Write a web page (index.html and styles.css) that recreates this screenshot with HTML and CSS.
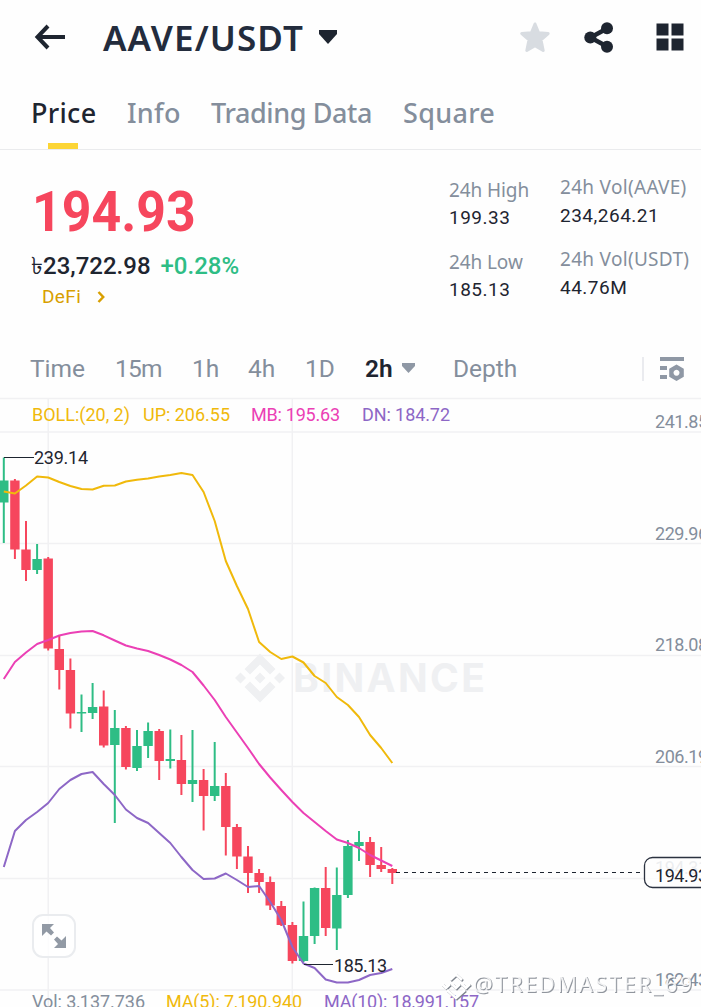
FILE: index.html
```html
<!DOCTYPE html>
<html lang="en">
  <head>
    <meta charset="utf-8">
    <title>AAVE/USDT</title>
    <link rel="stylesheet" href="styles.css">
  </head>
  <body>
    <header class="topbar">
      <svg class="back" width="32" height="26" viewBox="0 0 32 26">
        <path d="M14 2 L3.5 13 L14 24 M3.5 13 H31" />
      </svg>
      <h1 class="pair">AAVE/USDT</h1>
      <svg class="pair-caret" width="18" height="14" viewBox="0 0 18 14">
        <path d="M0 0H18V4L9 14L0 4Z" />
      </svg>
      <div class="actions">
        <svg class="star" width="30" height="31" viewBox="0 0 30 31">
          <path d="M15 2 L18.600 10.700 L28.200 11.500 L21 17.800 L23.200 28.500 L15 23.600 L6.800 28.500 L9 17.800 L1.800 11.500 L11.400 10.700 Z" />
        </svg>
        <svg class="share" width="30" height="31" viewBox="0 0 30 31">
          <path d="M23 6.500 L6.500 15.500 L23 24.500" />
          <circle cx="6.300" cy="15.500" r="6" />
          <circle cx="23" cy="6.300" r="6" />
          <circle cx="23" cy="24.700" r="6" />
        </svg>
        <svg class="apps" width="28" height="28" viewBox="0 0 28 28">
          <path d="M.5 .5h12v12h-12z M15.500 .5h12v12h-12z M.5 15.500h12v12h-12z M15.500 15.500h12v12h-12z" />
        </svg>
      </div>
    </header>

    <nav class="tabs">
      <a class="tab active">Price</a>
      <a class="tab info">Info</a>
      <a class="tab trading">Trading Data</a>
      <a class="tab square">Square</a>
    </nav>

    <section class="ticker">
      <div class="ticker-main">
        <div class="last-price">194.93</div>
        <div class="fiat">
          <span class="fiat-price">৳23,722.98</span>
          <span class="change">+0.28%</span>
        </div>
        <a class="tag">DeFi
          <svg width="8" height="12" viewBox="0 0 8 12"><path d="M1.500 1L6.200 6L1.500 11" /></svg>
        </a>
      </div>
      <dl class="stats">
        <dt>24h High</dt>
        <dd>199.33</dd>
        <dt>24h Low</dt>
        <dd>185.13</dd>
      </dl>
      <dl class="stats volume">
        <dt>24h Vol(AAVE)</dt>
        <dd>234,264.21</dd>
        <dt>24h Vol(USDT)</dt>
        <dd>44.76M</dd>
      </dl>
    </section>

    <nav class="intervals">
      <a class="time">Time</a>
      <a class="m15">15m</a>
      <a class="h1">1h</a>
      <a class="h4">4h</a>
      <a class="d1">1D</a>
      <a class="h2 active">2h
        <svg width="13" height="10" viewBox="0 0 13 10"><path d="M0 0H13V3L6.500 10L0 3Z" /></svg>
      </a>
      <a class="depth">Depth</a>
      <svg class="settings" width="24" height="24" viewBox="0 0 24 24">
        <path d="M0 0H24V4H0Z M0 9H7V13H0Z M0 18H7V22H0Z" />
        <path fill-rule="evenodd" d="M16.500 7.500L23.800 11.700V19.800L16.500 24L9.200 19.800V11.700Z M16.500 12.700a3 3 0 1 0 .01 0Z" />
      </svg>
    </nav>

    <main class="chart">
      <svg class="plot" width="701" height="610" viewBox="0 397 701 610">
        <g class="grid">
          <path d="M0 398.500H701 M0 432H701 M0 543.500H701 M0 655.500H701 M0 766.500H701 M0 878.500H701 M0 990H701" />
          <path d="M48.200 399V1007 M292.300 399V1007" />
        </g>

        <g class="brand">
          <path d="M260 653.500L275.500 669L270 674.500L260 664.500L250 674.500L244.500 669Z M260 702.500L275.500 687L270 681.500L260 691.500L250 681.500L244.500 687Z M260 672.500L265.500 678L260 683.500L254.500 678Z M240.500 672.500L246 678L240.500 683.500L235 678Z M279.500 672.500L285 678L279.500 683.500L274 678Z" />
          <text x="293" y="692" textLength="192">BINANCE</text>
        </g>

        <g class="axis">
          <text x="655" y="428" textLength="53">241.85</text>
          <text x="655" y="540" textLength="53">229.96</text>
          <text x="655" y="651" textLength="53">218.08</text>
          <text x="655" y="763" textLength="53">206.19</text>
          <text x="655" y="874" textLength="53">194.31</text>
          <text x="655" y="986" textLength="53">182.43</text>
        </g>

        <g class="legend">
          <text class="up" x="32" y="421" textLength="98">BOLL:(20, 2)</text>
          <text class="up" x="143" y="421" textLength="87">UP: 206.55</text>
          <text class="mb" x="251" y="421" textLength="89">MB: 195.63</text>
          <text class="dn" x="362" y="421" textLength="88">DN: 184.72</text>
          <text class="vol" x="32" y="1008" textLength="113">Vol: 3,137.736</text>
          <text class="up" x="166" y="1008" textLength="136">MA(5): 7,190.940</text>
          <text class="dn" x="324" y="1008" textLength="155">MA(10): 18,991.157</text>
        </g>

        <g id="candles"></g>
        <g id="bands"></g>

        <g class="extremes">
          <path d="M4 457.500H34 M304 964.500H333" />
          <text x="34" y="464" textLength="54">239.14</text>
          <text x="334" y="972" textLength="53">185.13</text>
        </g>

        <g class="current">
          <path d="M396 872.500H642" />
          <rect x="644.500" y="857.500" width="80" height="30" rx="8" />
          <text x="655" y="882" textLength="53">194.93</text>
        </g>

        <g class="watermark">
          <path d="M450 980L456 974.500L462 980 M442 984L446 988L450 984 M452 984L456 988L460 984 M462 984L466 988L470 984 M447 990L456 998L465 990" />
          <text x="473" y="992" textLength="219">@TREDMASTER_69</text>
        </g>
      </svg>
      <button class="expand">
        <svg width="24" height="24" viewBox="0 0 24 24">
          <path d="M0 0H12L8 4L12 8.500L9 11.500L4.500 7.500L0 12Z M24 24H12L16 20L12 15.500L15 12.500L19.500 16.500L24 12Z" />
        </svg>
      </button>
    </main>

    <script src="chart.js"></script>
  </body>
</html>
```
FILE: styles.css
```css
body {
  margin: 0;
  width: 701px;
  height: 1007px;
  overflow: hidden;
  background: #fefefe;
  color: #1e2530;
  font-family: Roboto, "Liberation Sans", sans-serif;
}

svg {
  display: block;
  flex: none;
}

.topbar {
  display: flex;
  align-items: center;
  height: 74px;
  padding: 0 17px 0 34px;
}

.back path {
  fill: none;
  stroke: #1e2530;
  stroke-width: 4;
}

.pair {
  margin: 2px 0 0 37px;
  width: 216px;
  font: 600 35px/48px "Noto Sans", sans-serif;
  letter-spacing: 1.1px;
  white-space: nowrap;
  color: #232c3d;
}

.pair-caret {
  fill: #1e2530;
}

.actions {
  display: flex;
  align-items: center;
  margin-left: auto;
}

.star {
  fill: #d8dce1;
  stroke: #d8dce1;
  stroke-width: 3;
  stroke-linejoin: round;
}

.share {
  margin-left: 34px;
  fill: #1e2530;
}

.share path {
  fill: none;
  stroke: #1e2530;
  stroke-width: 4.5;
}

.apps {
  margin-left: 42px;
  fill: #1e2530;
}

.tabs {
  display: flex;
  height: 75px;
  padding-left: 31px;
  border-bottom: 1px solid #eaebed;
  font: 500 27px/78px "Noto Sans", sans-serif;
  color: #848e9c;
}

.tab {
  box-sizing: border-box;
  flex: none;
  white-space: nowrap;
  letter-spacing: 0.3px;
}

.tab.active {
  width: 96px;
  height: 75px;
  color: #1e2530;
  background: linear-gradient(#fcd535, #fcd535) 17px 69px / 30px 6px no-repeat;
}

.tab.info {
  width: 84px;
}

.tab.trading {
  width: 192px;
  letter-spacing: -0.4px;
}

.ticker {
  display: flex;
  height: 190px;
  box-sizing: border-box;
  padding: 25px 0 0 31px;
}

.ticker-main {
  width: 418px;
}

.last-price {
  height: 76px;
  font-size: 56px;
  font-weight: 700;
  line-height: 75px;
  color: #f6465d;
  transform: translateX(1px) scaleX(0.925);
  transform-origin: left;
}

.fiat {
  display: flex;
  gap: 10px;
  font-size: 24px;
  font-weight: 500;
  line-height: 30px;
}

.change {
  color: #2ebd85;
}

.tag {
  display: flex;
  align-items: center;
  gap: 16px;
  margin-left: 11px;
  font-size: 19px;
  line-height: 32px;
  letter-spacing: 0.4px;
  color: #d89f00;
}

.tag path {
  fill: none;
  stroke: #d89f00;
  stroke-width: 2.5;
}

.stats {
  margin: 0;
  padding-top: 1px;
  width: 111px;
  white-space: nowrap;
}

.stats.volume {
  padding-top: 0;
}

.stats dt {
  font: 19px/28px "Noto Sans", sans-serif;
  letter-spacing: -0.1px;
  color: #848e9c;
}

.stats.volume dt {
  margin-top: -2px;
  padding-bottom: 1px;
  letter-spacing: 0.3px;
}

.stats dd {
  margin: 0 0 16px;
  font-size: 19px;
  line-height: 28px;
  letter-spacing: 0.5px;
}

.stats.volume dd {
  margin-bottom: 17px;
}

.intervals {
  display: flex;
  align-items: center;
  height: 57px;
  padding-left: 30px;
  font-size: 24.5px;
  color: #848e9c;
}

.intervals a {
  flex: none;
}

.time {
  width: 85px;
}

.m15 {
  width: 77px;
  letter-spacing: -0.8px;
}

.h1 {
  width: 56px;
}

.h4 {
  width: 57px;
}

.d1 {
  width: 60px;
}

.h2 {
  display: flex;
  align-items: center;
  gap: 9px;
  width: 88px;
  font-weight: 600;
}

.h2.active {
  color: #1e2530;
}

.h2 svg {
  margin-top: -2px;
}

.h2 svg,
.settings {
  fill: #8f98a5;
}

.depth {
  width: 189px;
}

.settings {
  padding-left: 16px;
  border-left: 2px solid #eaebef;
}

.chart {
  position: relative;
}

.plot text {
  font-size: 18px;
}

.grid path {
  stroke: #f1f1f3;
  stroke-width: 1.5;
}

.brand {
  fill: #eff0f2;
}

.plot .brand text {
  font: 700 39px Inter, sans-serif;
}

.axis {
  fill: #848e9c;
}

.up {
  fill: #f0b90b;
  stroke: #f0b90b;
}

.mb {
  fill: #eb40b5;
  stroke: #eb40b5;
}

.dn {
  fill: #8d67c6;
  stroke: #8d67c6;
}

.vol {
  fill: #848e9c;
}

.legend text {
  stroke: none;
}

#candles {
  stroke-width: 2;
}

.rise {
  fill: #2ebd85;
  stroke: #2ebd85;
}

.fall {
  fill: #f6465d;
  stroke: #f6465d;
}

#candles rect {
  stroke: none;
}

#bands polyline {
  fill: none;
  stroke-width: 2;
  stroke-linejoin: round;
}

.extremes path,
.current path {
  stroke: #1e2530;
  stroke-width: 1.2;
}

.current path {
  stroke-dasharray: 4 4;
}

.current rect {
  fill: #fefefe;
  fill-opacity: 0.85;
  stroke: #2b3240;
  stroke-width: 1.3;
}

.extremes text,
.current text {
  fill: #1e2530;
}

.watermark {
  fill: #fff;
  fill-opacity: 0.85;
  filter: drop-shadow(1px 1px 0.5px #7d838c);
}

.watermark path {
  fill: none;
  stroke: #fff;
  stroke-width: 2.5;
}

.plot .watermark text {
  font: 22px "Noto Sans", sans-serif;
}

.expand {
  position: absolute;
  left: 32px;
  top: 517px;
  display: grid;
  place-items: center;
  width: 44px;
  height: 44px;
  padding: 0;
  border: 2px solid #eaecef;
  border-radius: 11px;
  background: rgba(255, 255, 255, 0.8);
}

.expand svg {
  fill: #929aa5;
}
```
FILE: chart.js
```js
var NS = "http://www.w3.org/2000/svg";
var START = 3.8;
var STEP = 11.1;
var BODY = 9.4;

// high, body top, body bottom, low, rising
var candles = [
  [457.5, 480.5, 502.5, 543, 1],
  [479, 480.5, 549.5, 559, 0],
  [521, 549.5, 570, 581, 0],
  [544, 559, 570, 574, 1],
  [557, 558.5, 648.5, 650.5, 0],
  [635.5, 649, 670, 689.5, 0],
  [658.5, 670, 713.5, 728.5, 0],
  [694.5, 712, 713.5, 732, 1],
  [683, 707, 713, 719, 1],
  [690.5, 706.5, 745.5, 747.5, 0],
  [710, 728, 745, 823, 1],
  [726, 728, 767, 769.5, 0],
  [730, 746, 768, 771, 1],
  [722.5, 731, 746, 758, 1],
  [729, 731, 761, 780, 0],
  [729.5, 759, 761, 768.5, 1],
  [735, 760, 784, 795, 0],
  [730, 780, 784, 802, 1],
  [769, 780, 796, 830.5, 0],
  [742, 786, 796, 801, 1],
  [773, 786, 827, 855.5, 0],
  [824, 827, 856.5, 869, 0],
  [846, 856.5, 873, 893, 0],
  [869, 873, 882, 893, 0],
  [876.5, 882, 905.5, 910, 0],
  [901, 906, 925, 926, 0],
  [922, 925, 961, 963.5, 0],
  [901.5, 936, 961, 962, 1],
  [887.5, 888, 936, 944, 1],
  [867, 888, 928, 936, 0],
  [867.5, 895, 928.5, 950, 1],
  [840, 846, 895, 898, 1],
  [831, 842, 846, 861, 1],
  [837, 842, 865, 877, 0],
  [847, 865, 869, 872, 0],
  [868, 869, 873, 884, 0],
];

var bands = {
  up: [
    491.5, 493.5, 485.5, 476.5, 477.5, 482, 486, 489, 489.5, 485.7, 485.5,
    481.5, 479.7, 478.5, 476.5, 475, 473, 475, 492, 521, 561, 586, 609, 642,
    652, 659, 656.5, 662.5, 676, 683, 697, 705, 717, 735, 748, 763,
  ],
  mb: [
    679, 662, 652.5, 644, 640, 635.5, 633, 631.5, 631, 635.3, 640.5, 645.5,
    648.5, 651, 655, 659.5, 665, 672, 685.5, 700, 717, 732.5, 748, 764, 777.5,
    790, 802, 813, 822, 831, 839.5, 843, 848, 855, 860.5, 866,
  ],
  dn: [
    867, 831, 820, 812, 803, 789, 780, 774, 772, 784, 795, 809.5, 818, 823,
    833, 843, 857, 870, 879, 878.5, 873.5, 880, 887, 886, 902, 920, 947, 963.5,
    968, 979.5, 982.5, 982.5, 980, 975, 973, 969,
  ],
};

function add(parent, tag, attrs) {
  var el = document.createElementNS(NS, tag);
  for (var key in attrs) {
    el.setAttribute(key, attrs[key]);
  }
  parent.appendChild(el);
  return el;
}

var candleLayer = document.getElementById("candles");
candles.forEach(function (c, i) {
  var x = START + STEP * i;
  var g = add(candleLayer, "g", { class: c[4] ? "rise" : "fall" });
  add(g, "line", { x1: x, x2: x, y1: c[0], y2: c[3] });
  add(g, "rect", {
    x: x - BODY / 2,
    y: c[1],
    width: BODY,
    height: c[2] - c[1],
  });
});

var bandLayer = document.getElementById("bands");
Object.keys(bands).forEach(function (name) {
  var points = bands[name].map(function (y, i) {
    return START + STEP * i + "," + y;
  });
  add(bandLayer, "polyline", { class: name, points: points.join(" ") });
});
```
